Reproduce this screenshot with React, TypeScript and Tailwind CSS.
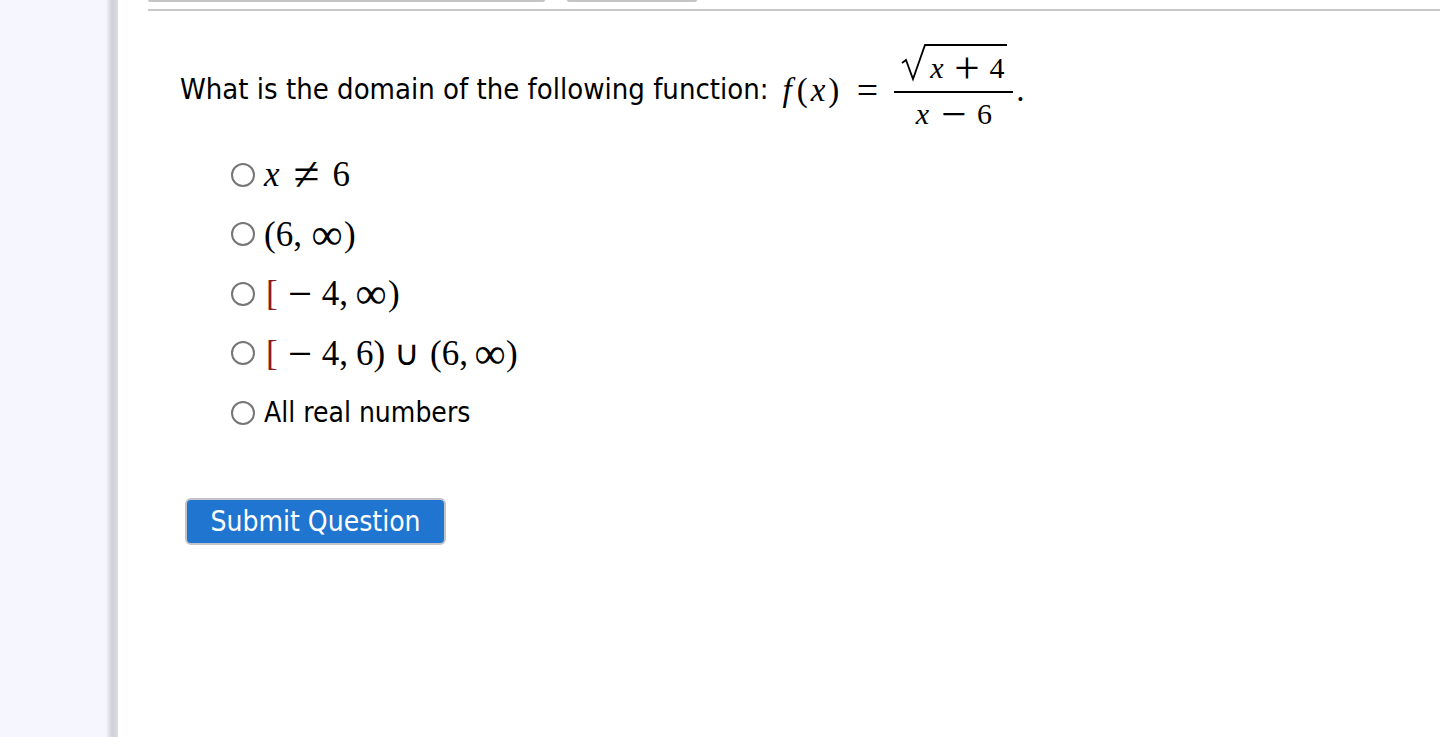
import React, { useState } from 'react';

const sans = { fontFamily: '"DejaVu Sans Condensed", "DejaVu Sans", sans-serif' };
const serif = { fontFamily: '"Liberation Serif", "Times New Roman", serif' };

const Radio: React.FC<{ checked: boolean; onClick: () => void }> = ({ checked, onClick }) => (
  <button
    onClick={onClick}
    className="w-6 h-6 shrink-0 rounded-full border-2 border-[#767676] bg-white flex items-center justify-center"
  >
    {checked && <span className="w-3 h-3 rounded-full bg-[#1f75cf]" />}
  </button>
);

// wide TeX-like glyphs: a fixed box, glyph scaled up inside it (scale doesn't touch the line height)
const Op: React.FC<{ children: React.ReactNode; cls: string }> = ({ children, cls }) => (
  <span className={`inline-block text-center ${cls}`}>{children}</span>
);

const Sqrt: React.FC<{ children: React.ReactNode }> = ({ children }) => (
  <span className="flex items-stretch">
    <svg width="26" height="39" viewBox="0 0 26 39" className="shrink-0">
      <path d="M1 19 L5 16 L12 35 L24 1 L26 1" fill="none" stroke="#000" strokeWidth="1.8" strokeLinejoin="miter" />
    </svg>
    <span className="border-t-2 border-black pt-[7px] pl-[3px] pr-[2px] leading-none">{children}</span>
  </span>
);

export default function App() {
  const [choice, setChoice] = useState<number | null>(null);

  const inf = <Op cls="w-[30px] scale-[1.25]">∞</Op>;
  const minus = <Op cls="w-[24px] scale-[1.22] ml-[10px] mr-[10px]">−</Op>;

  const options: React.ReactNode[] = [
    <span style={serif} className="text-[35px] leading-none">
      <i className="mr-[3px]">x</i>
      <Op cls="w-[27px] scale-[1.35] ml-[10px] mr-[13px]">≠</Op>6
    </span>,
    <span style={serif} className="text-[35px] leading-none">
      (6,<span className="ml-[10px] mr-[2px]">{inf}</span>)
    </span>,
    <span style={serif} className="text-[35px] leading-none">
      <span className="text-[#8b1a1a] ml-[2px]">[</span>
      {minus}4,<span className="ml-[8px] mr-[2px]">{inf}</span>)
    </span>,
    <span style={serif} className="text-[35px] leading-none">
      <span className="text-[#8b1a1a] ml-[2px]">[</span>
      {minus}4,<span className="ml-[8px]">6)</span>
      <span className="ml-[9px] mr-[10px]">∪</span>(6,<span className="ml-[7px] mr-[1px]">{inf}</span>)
    </span>,
    <span style={sans} className="text-[28px] leading-none">All real numbers</span>,
  ];

  return (
    <div className="flex w-[1440px] h-[737px] bg-white overflow-hidden">
      <aside className="w-[118px] shrink-0 flex bg-[#f5f6fe]">
        <div className="flex-1" />
        <div className="w-[12px] bg-gradient-to-r from-[#f5f6fe] via-[#cfcfd8] to-[#dcdce2]" />
      </aside>

      <main className="flex-1 pl-[30px]">
        <div className="flex gap-[22px] h-[2px]">
          <div className="w-[397px] h-[2px] bg-[#c4c4c4] rounded-b" />
          <div className="w-[130px] h-[2px] bg-[#c4c4c4] rounded-b" />
        </div>
        <div className="mt-[7px] h-[2px] bg-[#c8c8c8]" />

        <div className="pl-[32px] pt-[33px]">
          <div className="flex items-center text-black" style={sans}>
            <span className="text-[29px]">What is the domain of the following function:</span>
            <span style={serif} className="ml-[14px] text-[33px] leading-none flex items-center">
              <i className="mr-[5px]">f</i>(<i className="mx-[3px]">x</i>)
              <Op cls="w-[21px] scale-[1.15] ml-[18px] mr-[16px]">=</Op>
              <span className="w-[119px] inline-flex flex-col items-center text-[30px] leading-none">
                <span className="flex pb-[8px]">
                  <Sqrt>
                    <i>x</i>
                    <Op cls="w-[26px] scale-[1.5] ml-[10px] mr-[10px]">+</Op>4
                  </Sqrt>
                </span>
                <span className="w-full h-[2px] bg-black" />
                <span className="pt-[6px] pb-[7px] leading-none">
                  <i className="mr-[2px]">x</i>
                  <Op cls="w-[26px] scale-[1.5] ml-[10px] mr-[10px]">−</Op>6
                </span>
              </span>
              <span className="ml-[3px]">.</span>
            </span>
          </div>

          <div className="pl-[51px] pt-[20px] flex flex-col gap-[22.5px]">
            {options.map((opt, i) => (
              <label key={i} className="flex items-center gap-[9px] h-[37px] cursor-pointer">
                <Radio checked={choice === i} onClick={() => setChoice(i)} />
                {opt}
              </label>
            ))}
          </div>

          <button
            style={sans}
            className="mt-[67px] ml-[5px] w-[261px] h-[47px] rounded-[6px] border-2 border-[#c3c3c8] bg-[#1f75cf] text-white text-[28px] leading-none"
          >
            Submit Question
          </button>
        </div>
      </main>
    </div>
  );
}
